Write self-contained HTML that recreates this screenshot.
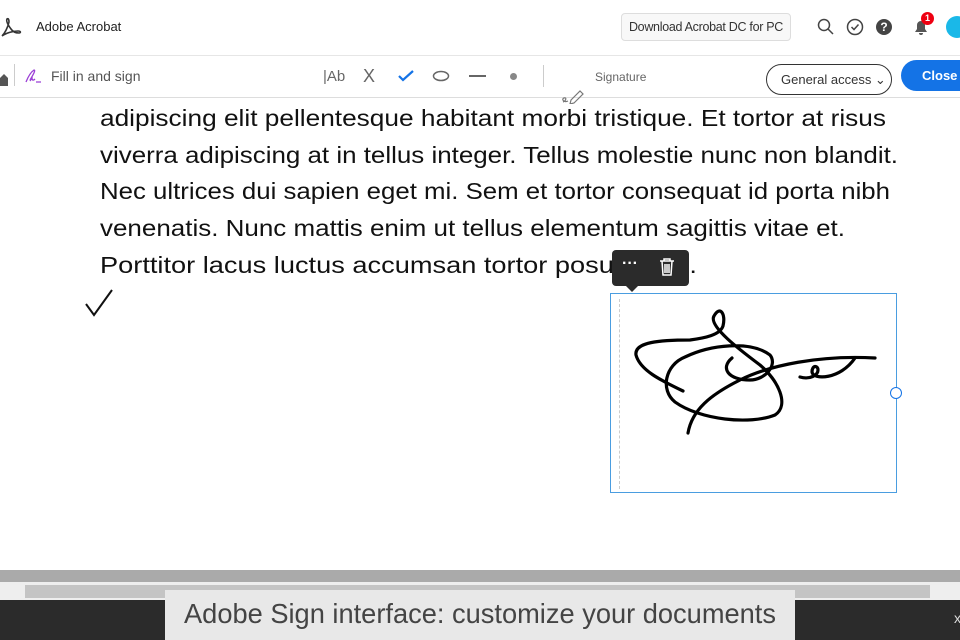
<!DOCTYPE html>
<html><head><meta charset="utf-8"><style>
*{margin:0;padding:0;box-sizing:border-box}
body{width:960px;height:640px;overflow:hidden;background:#fff;font-family:"Liberation Sans",sans-serif;position:relative}
.a{position:absolute;white-space:nowrap}
</style></head><body>
<svg class="a" style="left:0;top:16px" width="24" height="22" viewBox="0 0 24 22"><path d="M2 20c3-3 6-9 7-14 0-3-1-4-2-3-1 2 1 6 4 10 2 3 5 4 8 4 2 0 2-2-1-2-5 0-12 2-16 5" fill="none" stroke="#333" stroke-width="1.6"/></svg>
<div class="a" style="left:36px;top:19px;font-size:13px;color:#222">Adobe Acrobat</div>
<div class="a" style="left:621px;top:13px;width:170px;height:28px;border:1px solid #ddd;border-radius:4px;background:#f8f8f8;font-size:12.5px;color:#333;text-align:center;line-height:26px;letter-spacing:-0.3px">Download Acrobat DC for PC</div>
<svg class="a" style="left:816px;top:17px" width="20" height="20"><circle cx="8" cy="8" r="5.5" fill="none" stroke="#444" stroke-width="1.5"/><path d="M12 12l5 5" stroke="#444" stroke-width="1.5"/></svg>
<svg class="a" style="left:845px;top:17px" width="20" height="20"><circle cx="10" cy="10" r="7.5" fill="none" stroke="#444" stroke-width="1.5"/><path d="M6.5 10l2.5 2.5 4.5-5" fill="none" stroke="#444" stroke-width="1.5"/></svg>
<div class="a" style="left:876px;top:19px;width:16px;height:16px;border-radius:50%;background:#444;color:#fff;font-size:12px;font-weight:bold;text-align:center;line-height:16px">?</div>
<svg class="a" style="left:912px;top:18px" width="18" height="18"><path d="M3 14h12l-2-3V7a4 4 0 0 0-8 0v4z M7 15a2 2 0 0 0 4 0" fill="#555"/></svg>
<div class="a" style="left:921px;top:12px;width:13px;height:13px;border-radius:50%;background:#e01;color:#fff;font-size:9px;font-weight:bold;text-align:center;line-height:13px">1</div>
<div class="a" style="left:946px;top:16px;width:22px;height:22px;border-radius:50%;background:#1ab8e8"></div>
<div class="a" style="left:0;top:55px;width:960px;height:1px;background:#e6e6e6"></div>
<svg class="a" style="left:0;top:72px" width="8" height="14"><path d="M0 6l4-4 4 4v8H0z" fill="#555"/></svg>
<div class="a" style="left:14px;top:64px;width:1px;height:22px;background:#ccc"></div>
<svg class="a" style="left:24px;top:68px" width="18" height="16"><path d="M2 14c2-5 5-10 8-12 2 0-1 5-4 10M6 13l2-3c0 2 1 3 3 1M12 14h5" fill="none" stroke="#9b3fd6" stroke-width="1.3"/></svg>
<div class="a" style="left:51px;top:68px;font-size:14px;color:#555">Fill in and sign</div>
<div class="a" style="left:323px;top:68px;font-size:15px;color:#666">|Ab</div>
<div class="a" style="left:363px;top:66px;font-size:18px;color:#666">X</div>
<svg class="a" style="left:398px;top:70px" width="16" height="12"><path d="M1 6l4 4 10-9" fill="none" stroke="#1473e6" stroke-width="2.2"/></svg>
<svg class="a" style="left:432px;top:70px" width="18" height="12"><ellipse cx="9" cy="6" rx="7.5" ry="4.5" fill="none" stroke="#666" stroke-width="1.5"/></svg>
<div class="a" style="left:469px;top:75px;width:17px;height:2px;background:#666"></div>
<div class="a" style="left:510px;top:73px;width:7px;height:7px;border-radius:50%;background:#888"></div>
<div class="a" style="left:543px;top:65px;width:1px;height:22px;background:#ccc"></div>
<div class="a" style="left:595px;top:70px;font-size:12px;color:#666">Signature</div>
<div class="a" style="left:766px;top:64px;width:126px;height:31px;border:1.5px solid #333;border-radius:16px;font-size:13px;color:#333;line-height:29px;padding-left:14px">General access &#8964;</div>
<div class="a" style="left:901px;top:60px;width:80px;height:31px;border-radius:16px;background:#1473e6;color:#fff;font-size:13px;font-weight:bold;line-height:31px;padding-left:21px">Close</div>
<div class="a" style="left:0;top:97px;width:960px;height:1px;background:#ddd"></div>
<svg class="a" style="left:561px;top:88px" width="26" height="16"><path d="M2 14c3-1 4-5 1-4s0 5 4 3M10 12l9-9 3 3-9 9-4 1z" fill="none" stroke="#777" stroke-width="1.2"/></svg>
<svg class="a" style="left:0;top:98px" width="960" height="200">
<g font-family="Liberation Sans,sans-serif" font-size="23" fill="#111">
<text x="100" y="28" textLength="786" lengthAdjust="spacingAndGlyphs">adipiscing elit pellentesque habitant morbi tristique. Et tortor at risus</text>
<text x="100" y="65" textLength="798" lengthAdjust="spacingAndGlyphs">viverra adipiscing at in tellus integer. Tellus molestie nunc non blandit.</text>
<text x="100" y="101" textLength="790" lengthAdjust="spacingAndGlyphs">Nec ultrices dui sapien eget mi. Sem et tortor consequat id porta nibh</text>
<text x="100" y="138" textLength="745" lengthAdjust="spacingAndGlyphs">venenatis. Nunc mattis enim ut tellus elementum sagittis vitae et.</text>
<text x="100" y="175" textLength="597" lengthAdjust="spacingAndGlyphs">Porttitor lacus luctus accumsan tortor posuere ac.</text>
</g></svg>
<svg class="a" style="left:84px;top:288px" width="30" height="30"><path d="M2 16l8 11L28 2" fill="none" stroke="#111" stroke-width="2"/></svg>
<div class="a" style="left:612px;top:250px;width:77px;height:36px;background:#2b2b2b;border-radius:4px"></div>
<div class="a" style="left:626px;top:286px;width:0;height:0;border-left:6px solid transparent;border-right:6px solid transparent;border-top:6px solid #2b2b2b"></div>
<div class="a" style="left:622px;top:255px;color:#fff;font-size:16px;font-weight:bold">···</div>
<svg class="a" style="left:658px;top:257px" width="18" height="20"><path d="M2 4h14M6 4V2h6v2M4 4l1 14h8l1-14M7 7v9M9 7v9M11 7v9" fill="none" stroke="#fff" stroke-width="1.5"/></svg>
<div class="a" style="left:610px;top:293px;width:287px;height:200px;border:1px solid #4a9de0"></div>
<div class="a" style="left:619px;top:299px;width:0;height:190px;border-left:1px dashed #ccc"></div>
<div class="a" style="left:890px;top:387px;width:12px;height:12px;border-radius:50%;border:1.5px solid #1473e6;background:#fff"></div>
<svg class="a" style="left:600px;top:240px" width="310" height="260" viewBox="0 0 310 260" fill="none" stroke="#000" stroke-width="3.2" stroke-linecap="round">
<path d="M83 151C60 140 40 130 36 115C34 102 60 100 90 100C105 98 120 95 123 86C126 74 120 65 114 76C108 86 140 110 160 125C178 140 190 165 175 175C150 185 100 180 75 162C60 150 65 125 85 117C110 105 150 100 170 115C178 125 165 140 150 140C128 140 120 128 132 118"/>
<path d="M88 193C92 170 110 155 140 140C170 125 220 115 275 118"/>
<path d="M200 137C210 140 218 135 218 130C218 125 212 125 212 132C213 140 240 140 255 118"/>
</svg>
<div class="a" style="left:0;top:570px;width:960px;height:12px;background:#aaa"></div>
<div class="a" style="left:0;top:582px;width:960px;height:18px;background:#eee"></div>
<div class="a" style="left:25px;top:585px;width:905px;height:13px;background:#c4c4c4"></div>
<div class="a" style="left:0;top:600px;width:960px;height:40px;background:#2b2b2b"></div>
<div class="a" style="left:165px;top:590px;width:630px;height:50px;background:#e8e8e8"></div>
<svg class="a" style="left:165px;top:590px" width="630" height="50"><text x="19" y="33" font-family="Liberation Sans,sans-serif" font-size="28" fill="#444" textLength="592" lengthAdjust="spacingAndGlyphs">Adobe Sign interface: customize your documents</text></svg>
<div class="a" style="left:954px;top:610px;color:#ddd;font-size:14px">x</div>
</body></html>
